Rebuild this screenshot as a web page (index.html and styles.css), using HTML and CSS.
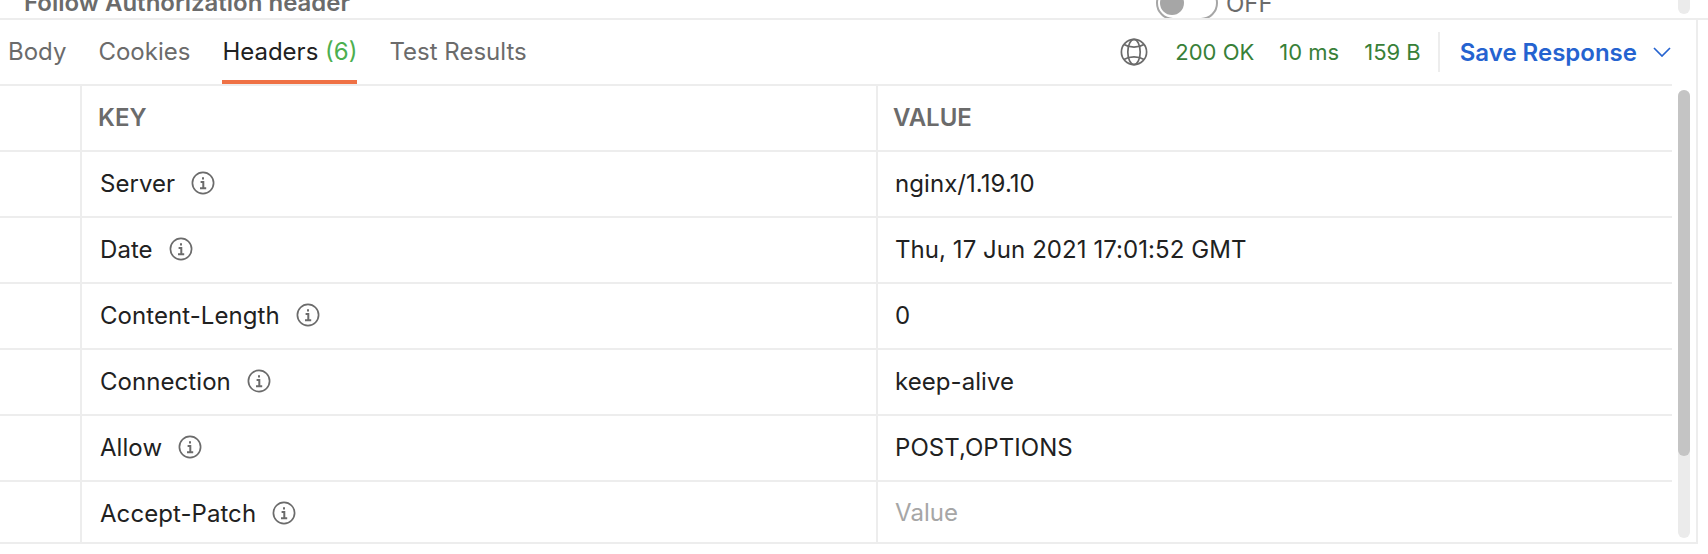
FILE: index.html
```html
<!DOCTYPE html>
<html lang="en">
<head>
<meta charset="utf-8">
<title>Response headers</title>
<link rel="stylesheet" href="styles.css">
</head>
<body>
<svg class="defs" width="0" height="0" aria-hidden="true">
  <symbol id="info" viewBox="0 0 24 24">
    <circle cx="12" cy="12" r="10.6" fill="none" stroke="#6b6b6b" stroke-width="1.7"/>
    <path d="M12 6.200v2.200M9.600 11h2.700v6M9 17.200h6.200" fill="none" stroke="#6b6b6b" stroke-width="2"/>
  </symbol>
</svg>
<section class="top">
  <div class="top-clip">
    <span class="follow">Follow Authorization header</span>
    <span class="toggle"><span class="knob"></span></span>
    <span class="off">OFF</span>
  </div>
  <span class="top-scroll"></span>
</section>
<section class="response">
  <nav class="tabs">
    <a class="tab">Body</a>
    <a class="tab">Cookies</a>
    <a class="tab active">Headers <span class="count">(6)</span></a>
    <a class="tab">Test Results</a>
    <div class="status">
      <svg class="globe" viewBox="0 0 28 28" aria-hidden="true">
        <circle cx="14" cy="14" r="12.600" fill="none" stroke="#6b6b6b" stroke-width="1.700"/>
        <ellipse cx="14" cy="14" rx="6.200" ry="12.600" fill="none" stroke="#6b6b6b" stroke-width="1.700"/>
        <path d="M4 6.500c5.500 3.400 14.500 3.400 20 0M4 21.500c5.500-3.400 14.500-3.400 20 0" fill="none" stroke="#6b6b6b" stroke-width="1.700"/>
      </svg>
      <span class="stat s1">200 OK</span>
      <span class="stat s2">10 ms</span>
      <span class="stat s3">159 B</span>
      <span class="divider"></span>
      <span class="save">Save Response</span>
      <svg class="chev" viewBox="0 0 18 10" aria-hidden="true"><path d="M1 1l8 8 8-8" fill="none" stroke="#2563d0" stroke-width="1.700"/></svg>
    </div>
  </nav>
  <div class="body-wrap">
    <div class="table">
      <div class="row head"><div class="gutter"></div><div class="key">KEY</div><div class="val">VALUE</div></div>
      <div class="row"><div class="gutter"></div><div class="key"><span>Server</span><svg class="info"><use href="#info"/></svg></div><div class="val">nginx/1.19.10</div></div>
      <div class="row"><div class="gutter"></div><div class="key"><span>Date</span><svg class="info"><use href="#info"/></svg></div><div class="val">Thu, 17 Jun 2021 17:01:52 GMT</div></div>
      <div class="row"><div class="gutter"></div><div class="key"><span>Content-Length</span><svg class="info"><use href="#info"/></svg></div><div class="val">0</div></div>
      <div class="row"><div class="gutter"></div><div class="key"><span>Connection</span><svg class="info"><use href="#info"/></svg></div><div class="val">keep-alive</div></div>
      <div class="row"><div class="gutter"></div><div class="key"><span>Allow</span><svg class="info"><use href="#info"/></svg></div><div class="val">POST,OPTIONS</div></div>
      <div class="row last"><div class="gutter"></div><div class="key"><span>Accept-Patch</span><svg class="info"><use href="#info"/></svg></div><div class="val placeholder">Value</div></div>
    </div>
    <div class="scroll"><div class="thumb"></div></div>
  </div>
</section>
</body>
</html>
```
FILE: styles.css
```css
* { box-sizing: border-box; }
html, body { margin: 0; padding: 0; }
body {
  width: 1708px;
  height: 554px;
  overflow: hidden;
  background: #fff;
  color: #212121;
  font-family: Inter, "Liberation Sans", sans-serif;
  font-size: 24px;
}
.defs { position: absolute; }

.top {
  height: 20px;
  border-bottom: 2px solid #ededed;
  display: flex;
  width: 1708px;
  overflow: hidden;
}
.top-clip {
  width: 1678px;
  height: 18px;
  display: flex;
  overflow: hidden;
  align-items: flex-start;
}
.follow {
  margin: -12px 0 0 24px;
  width: 1132px;
  font-size: 24px;
  line-height: 29px;
  font-weight: 600;
  color: #6b6b6b;
  white-space: nowrap;
}
.toggle {
  flex: none;
  width: 62px;
  height: 34px;
  margin-top: -14px;
  border: 2px solid #a6a6a6;
  border-radius: 17px;
  padding: 3px 0 0 2px;
}
.knob {
  display: block;
  width: 24px;
  height: 24px;
  border-radius: 50%;
  background: #a6a6a6;
}
.off {
  margin: -11px 0 0 8px;
  font-size: 24px;
  line-height: 29px;
  color: #6b6b6b;
}
.top-scroll {
  width: 12px;
  height: 14px;
  background: #ebebeb;
  border-radius: 0 0 6px 6px;
}

.response {
  width: 1696px;
  height: 522px;
  border-right: 2px solid #ededed;
  border-bottom: 2px solid #ededed;
  box-sizing: content-box;
}
.tabs {
  height: 64px;
  display: flex;
  align-items: stretch;
  padding-left: 8px;
}
.tab {
  height: 60px;
  line-height: 64px;
  color: #6b6b6b;
  margin-right: 32px;
  white-space: nowrap;
}
.tab.active {
  color: #212121;
  border-bottom: 4px solid #ef7145;
  box-sizing: content-box;
  height: 60px;
}
.count { color: #4caf50; }
.status {
  margin-left: auto;
  display: flex;
  align-items: center;
  height: 64px;
  padding: 0 25px 0 0;
}
.globe { width: 28px; height: 28px; margin-right: 27px; }
.stat { color: #388038; font-size: 22px; }
.s1 { margin-right: 25px; }
.s2 { margin-right: 25px; }
.divider { width: 2px; height: 40px; background: #ededed; margin: 0 20px 0 17px; }
.save { color: #2563d0; font-weight: 600; font-size: 24px; }
.chev { width: 18px; height: 10px; margin-left: 16px; }

.body-wrap { display: flex; }
.table { width: 1672px; border-top: 2px solid #ededed; }
.row {
  height: 66px;
  display: grid;
  grid-template-columns: 82px 796px 1fr;
  border-bottom: 2px solid #ededed;
}
.row.last { height: 62px; border-bottom: 0; }
.gutter { border-right: 2px solid #ededed; }
.key {
  display: flex;
  align-items: center;
  gap: 16px;
  padding: 0 0 2px 18px;
  border-right: 2px solid #ededed;
  letter-spacing: 0.06px;
}
.val {
  display: flex;
  align-items: center;
  padding: 0 0 2px 17px;
  letter-spacing: 0.06px;
}
.row.last .key { padding-bottom: 0; }
.head .key, .head .val { font-weight: 600; font-size: 24px; color: #6b6b6b; letter-spacing: 0; }
.head .key { padding-left: 16px; }
.head .val { padding-left: 15px; }
.info { width: 24px; height: 24px; flex: none; }
.placeholder { color: #a6a6a6; }

.scroll {
  margin: 6px 0 0 6px;
  width: 12px;
  height: 448px;
  background: #ebebeb;
  border-radius: 6px;
}
.thumb {
  height: 366px;
  background: #c4c4c4;
  border-radius: 6px;
}
```
